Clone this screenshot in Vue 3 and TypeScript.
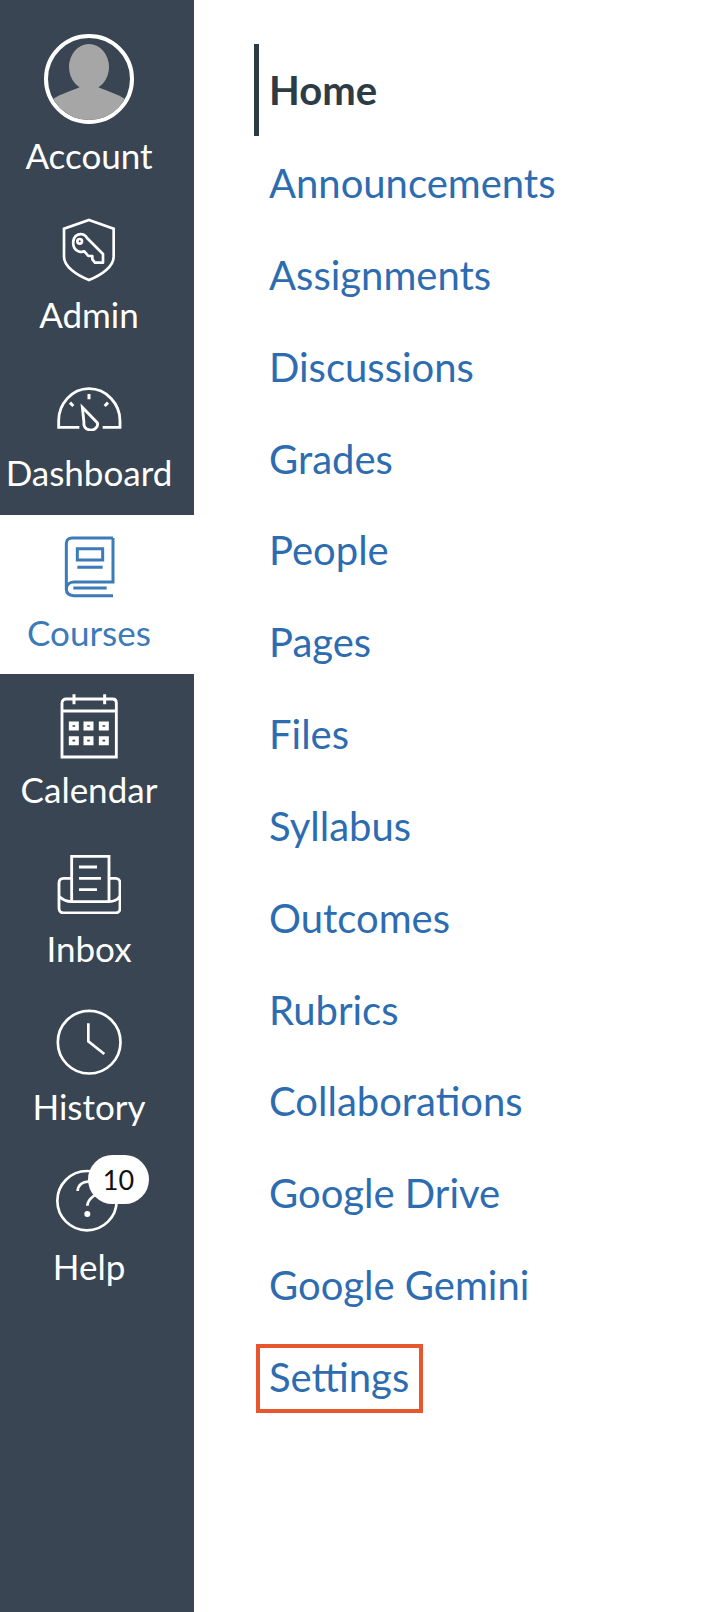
<script setup lang="ts">
const courseLinks = [
  'Announcements',
  'Assignments',
  'Discussions',
  'Grades',
  'People',
  'Pages',
  'Files',
  'Syllabus',
  'Outcomes',
  'Rubrics',
  'Collaborations',
  'Google Drive',
  'Google Gemini',
]
</script>

<template>
  <div class="page">
    <nav class="sidebar">
      <a class="item account">
        <span class="avatar">
          <svg viewBox="0 0 82 82" width="82" height="82">
            <ellipse cx="41" cy="29" rx="20" ry="23" fill="#a6a6a6" />
            <path d="M0 82V66C8 56 22 54 32 49H50C60 54 74 56 82 66V82Z" fill="#a6a6a6" />
          </svg>
        </span>
        <span class="label">Account</span>
      </a>

      <a class="item">
        <span class="icon">
          <svg viewBox="187 654 162 192" width="54" height="64" fill="none" stroke="#fff" stroke-width="8">
            <path d="M268 660L342 686V770C342 800 305 825 268 840C231 825 193 800 193 770V686Z" />
            <path d="M228 708C240 698 256 702 262 714L310 762V788H286L278 778V768H266L254 754C244 758 230 754 224 744C218 732 220 716 228 708Z" stroke-linejoin="round" />
            <circle cx="240" cy="724" r="7" stroke-width="8" />
          </svg>
        </span>
        <span class="label">Admin</span>
      </a>

      <a class="item">
        <span class="icon">
          <svg viewBox="168 136 200 134" width="66.67" height="44.67" fill="none" stroke="#fff" stroke-width="8.5">
            <path d="M238 260H176V240C176 190 215 144 267 144C320 144 360 190 360 240V260H308" />
            <path d="M247 200L292 246C296 258 284 270 270 268C256 266 250 256 252 246Z" />
            <path d="M267 160V176M210 186L220 196M324 186L314 196" stroke-width="9" />
          </svg>
        </span>
        <span class="label">Dashboard</span>
      </a>

      <a class="item active">
        <span class="icon">
          <svg viewBox="190 590 153 185" width="51" height="61.67" fill="none" stroke="#3c7ab8" stroke-width="9">
            <path d="M337 596V728H220C204 728 197 738 197 750C197 762 204 769 220 769H337" />
            <path d="M197 750V612C197 602 204 596 214 596H337" />
            <path d="M230 628H306V662H230Z" />
            <path d="M230 684H306M218 746H318" />
          </svg>
        </span>
        <span class="label">Courses</span>
      </a>

      <a class="item">
        <span class="icon">
          <svg viewBox="180 40 175 198" width="58.33" height="66" fill="none" stroke="#fff" stroke-width="8.5">
            <path d="M186 232V70C186 62 192 58 198 58H338C345 58 349 62 349 70V232Z" />
            <path d="M186 94H349" />
            <path d="M222 44V74M314 44V74" stroke-width="9" />
            <path d="M212 131H231V147H212ZM256 131H275V147H256ZM302 131H321V147H302ZM212 175H231V191H212ZM256 175H275V191H256ZM302 175H321V191H302Z" stroke-width="11" />
          </svg>
        </span>
        <span class="label">Calendar</span>
      </a>

      <a class="item">
        <span class="icon">
          <svg viewBox="170 523 194 182" width="64.67" height="60.67" fill="none" stroke="#fff" stroke-width="8.5">
            <path d="M214 664V530H326V664" />
            <path d="M236 562H290M236 596H302M236 630H290" />
            <path d="M214 596H190C180 596 176 602 176 610V686C176 694 182 700 190 700H346C354 700 359 694 359 686V610C359 602 354 596 346 596H326" />
            <path d="M176 650C186 660 200 666 214 666H326C340 666 352 660 359 650" />
          </svg>
        </span>
        <span class="label">Inbox</span>
      </a>

      <a class="item">
        <span class="icon">
          <svg viewBox="168 91 199 199" width="66.33" height="66.33" fill="none" stroke="#fff" stroke-width="8">
            <circle cx="267.5" cy="190.5" r="94" />
            <path d="M265 134V188L313 226" />
          </svg>
        </span>
        <span class="label">History</span>
      </a>

      <a class="item">
        <span class="icon help">
          <svg viewBox="168 570 186 190" width="62" height="63.33" fill="none" stroke="#fff" stroke-width="8">
            <circle cx="261" cy="665" r="89" />
            <path d="M233 636C234 618 248 608 264 608C282 608 294 620 294 634C294 650 262 654 262 680" />
            <circle cx="262" cy="705" r="9" fill="#fff" stroke="none" />
          </svg>
          <span class="badge">10</span>
        </span>
        <span class="label help-label">Help</span>
      </a>
    </nav>

    <ul class="course-nav">
      <li class="row current"><a>Home</a></li>
      <li v-for="link in courseLinks" :key="link" class="row"><a>{{ link }}</a></li>
      <li class="row"><a class="focused">Settings</a></li>
    </ul>
  </div>
</template>

<style>
html,
body {
  margin: 0;
  background: #fff;
}
</style>

<style scoped>
.page {
  display: flex;
  width: 706px;
  height: 1612px;
  overflow: hidden;
  font-family: Lato, 'Open Sans', sans-serif;
}

.sidebar {
  flex: 0 0 194px;
  display: flex;
  flex-direction: column;
  background: #394552;
}

.item {
  display: flex;
  flex-direction: column;
  align-items: center;
  padding: 20px 16px 23px 0;
  color: #fff;
}

.item.account {
  padding-top: 34px;
  padding-bottom: 23px;
}

.item.account .label {
  margin-top: 11px;
}

.item.active {
  background: #fff;
  color: #3c7ab8;
}

.item.active .label {
  margin-top: 12.5px;
  margin-bottom: -1px;
}

.avatar {
  box-sizing: border-box;
  width: 90px;
  height: 90px;
  border: 4px solid #fff;
  border-radius: 50%;
  overflow: hidden;
}

.avatar svg {
  display: block;
}

.icon {
  position: relative;
  display: flex;
  align-items: center;
  justify-content: center;
  height: 64px;
}

.icon.help {
  padding-right: 4px;
}

.label {
  margin-top: 11.5px;
  font-size: 35px;
  line-height: 40px;
  white-space: nowrap;
}

.help-label {
  margin-top: 13px;
}

.badge {
  position: absolute;
  left: 32px;
  top: -14px;
  width: 61px;
  height: 49px;
  border-radius: 25px;
  background: #fff;
  color: #111;
  font-size: 27px;
  line-height: 49px;
  text-align: center;
}

.course-nav {
  list-style: none;
  margin: 44px 0 0 60px;
  padding: 0;
}

.row {
  box-sizing: border-box;
  display: flex;
  align-items: center;
  height: 91.85px;
  padding: 2.5px 0 0 10px;
  border-left: 5px solid transparent;
  font-size: 40px;
  color: #2d6cb0;
  white-space: nowrap;
}

.row.current {
  padding-top: 1px;
  border-left-color: #2d3b45;
  color: #2d3b45;
  font-weight: 700;
}

.focused {
  margin: 4px 0 0 -13px;
  padding: 8px 10px 11px 9px;
  border: 4px solid #e8562e;
  line-height: 42px;
}
</style>
